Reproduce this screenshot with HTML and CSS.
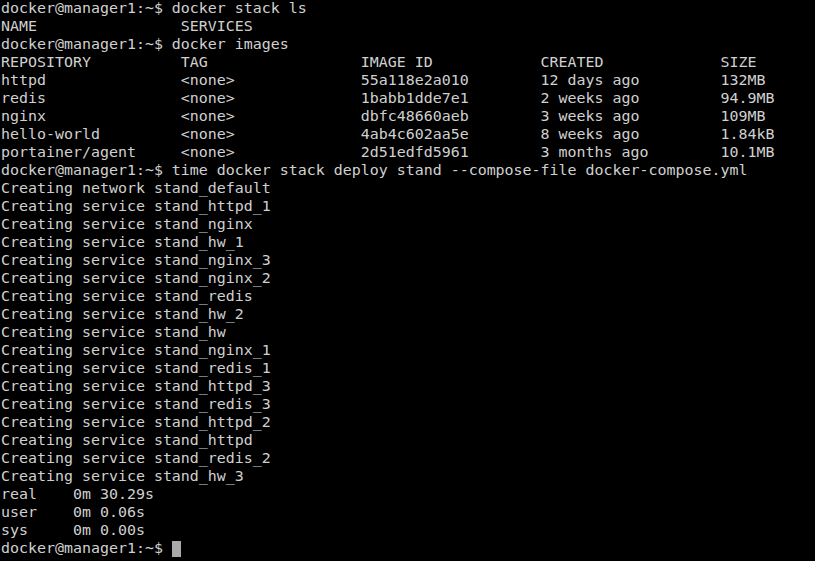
FILE: index.html
```html
<!DOCTYPE html>
<html>
<head>
<meta charset="utf-8">
<link rel="stylesheet" href="styles.css">
</head>
<body>
<pre class="term">docker@manager1:~$ docker stack ls
NAME                SERVICES
docker@manager1:~$ docker images
REPOSITORY          TAG                 IMAGE ID            CREATED             SIZE
httpd               &lt;none&gt;              55a118e2a010        12 days ago         132MB
redis               &lt;none&gt;              1babb1dde7e1        2 weeks ago         94.9MB
nginx               &lt;none&gt;              dbfc48660aeb        3 weeks ago         109MB
hello-world         &lt;none&gt;              4ab4c602aa5e        8 weeks ago         1.84kB
portainer/agent     &lt;none&gt;              2d51edfd5961        3 months ago        10.1MB
docker@manager1:~$ time docker stack deploy stand --compose-file docker-compose.yml
Creating network stand_default
Creating service stand_httpd_1
Creating service stand_nginx
Creating service stand_hw_1
Creating service stand_nginx_3
Creating service stand_nginx_2
Creating service stand_redis
Creating service stand_hw_2
Creating service stand_hw
Creating service stand_nginx_1
Creating service stand_redis_1
Creating service stand_httpd_3
Creating service stand_redis_3
Creating service stand_httpd_2
Creating service stand_httpd
Creating service stand_redis_2
Creating service stand_hw_3
real    0m 30.29s
user    0m 0.06s
sys     0m 0.00s
docker@manager1:~$ <span class="cursor"> </span></pre>
</body>
</html>
```
FILE: styles.css
```css
html, body {
  margin: 0;
  padding: 0;
  background: #000;
  width: 815px;
  height: 561px;
  overflow: hidden;
}
.term {
  margin: -1px 0 0 0;
  padding: 0 0 0 1px;
  font-family: "DejaVu Sans Mono", monospace;
  font-size: 14.95px;
  line-height: 18px;
  color: #d0d0d0;
  white-space: pre;
}
.cursor {
  display: inline-block;
  width: 9px;
  height: 16px;
  line-height: 16px;
  background: #aaaaaa;
  vertical-align: top;
  margin-top: 2px;
}
```
